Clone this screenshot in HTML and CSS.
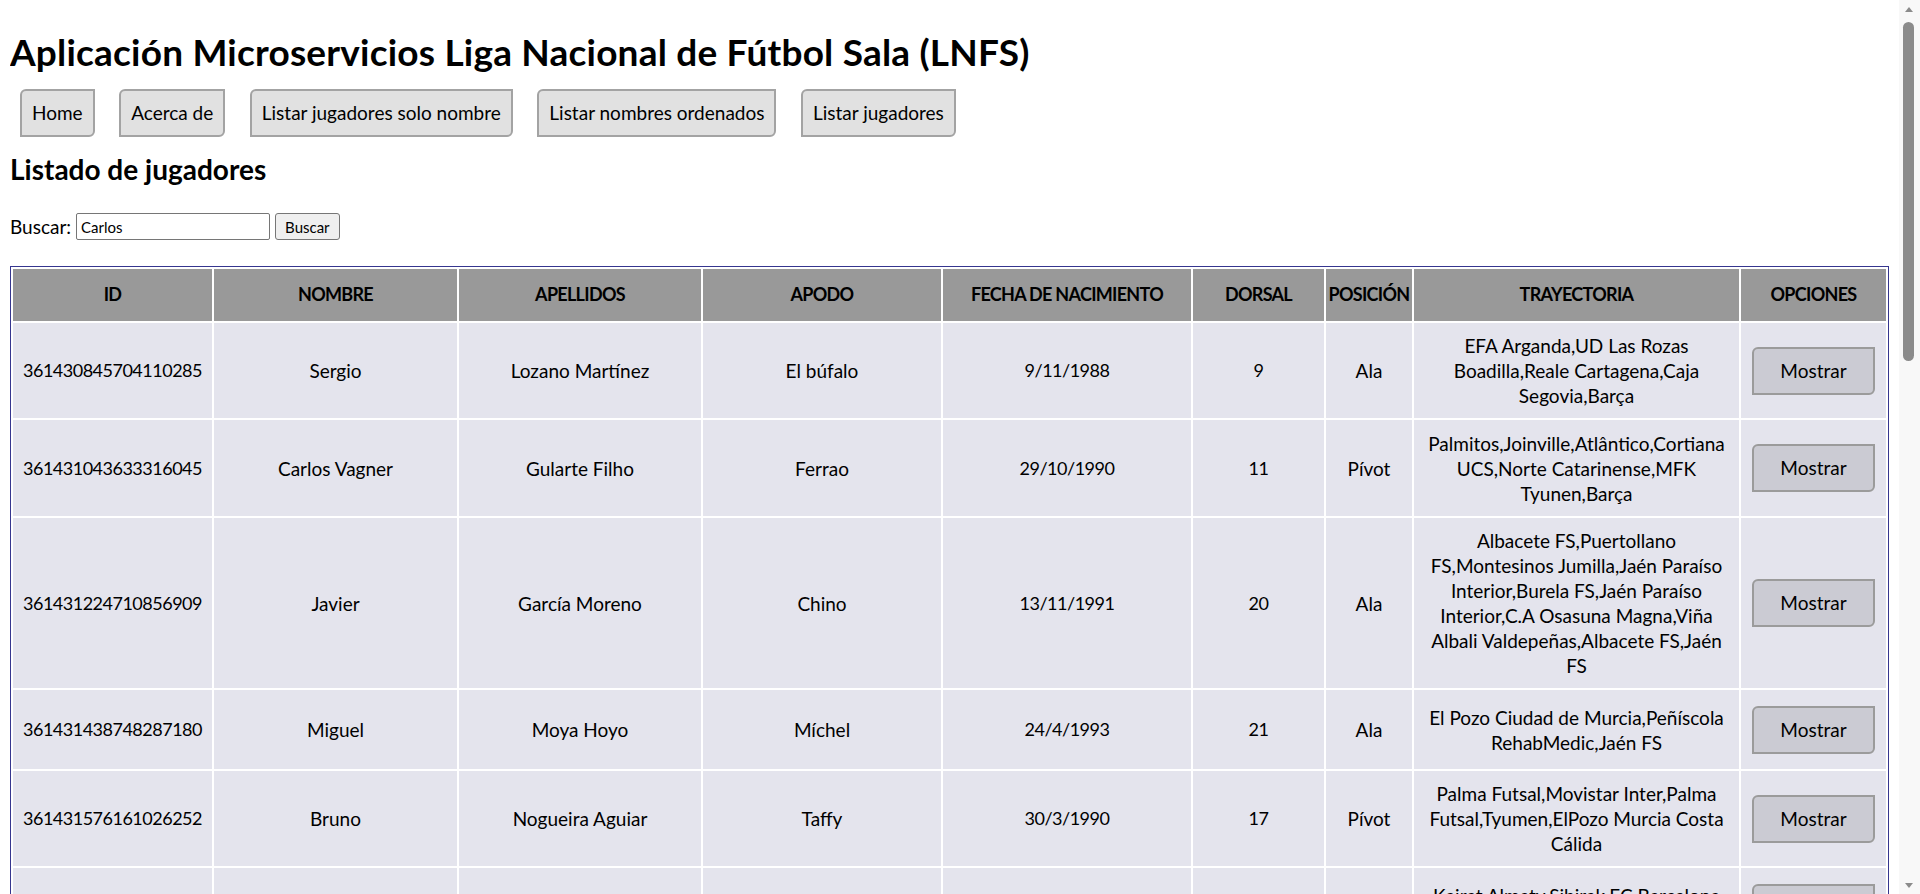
FILE: index.html
```html
<!DOCTYPE html>
<html lang="es">
<head>
<meta charset="utf-8">
<title>LNFS</title>
<link rel="stylesheet" href="styles.css">
</head>
<body>
<h1 class="title">Aplicación Microservicios Liga Nacional de Fútbol Sala (LNFS)</h1>
<nav class="nav">
  <button class="nav-btn">Home</button>
  <button class="nav-btn">Acerca de</button>
  <button class="nav-btn">Listar jugadores solo nombre</button>
  <button class="nav-btn">Listar nombres ordenados</button>
  <button class="nav-btn">Listar jugadores</button>
</nav>
<h2 class="subtitle">Listado de jugadores</h2>
<form class="search">
  <label class="search-label" for="q">Buscar:</label>
  <input class="search-input" id="q" type="text" value="Carlos">
  <button class="search-btn" type="button">Buscar</button>
</form>
<table class="players">
  <thead>
    <tr>
      <th class="c-id">ID</th>
      <th class="c-nombre">NOMBRE</th>
      <th class="c-apellidos">APELLIDOS</th>
      <th class="c-apodo">APODO</th>
      <th class="c-fecha">FECHA DE NACIMIENTO</th>
      <th class="c-dorsal">DORSAL</th>
      <th class="c-pos">POSICIÓN</th>
      <th class="c-tray">TRAYECTORIA</th>
      <th class="c-opc">OPCIONES</th>
    </tr>
  </thead>
  <tbody>
    <tr><td class="num">361430845704110285</td><td>Sergio</td><td>Lozano Martínez</td><td>El búfalo</td><td class="num">9/11/1988</td><td class="num">9</td><td>Ala</td><td class="tray">EFA Arganda,UD Las Rozas<br>Boadilla,Reale Cartagena,Caja<br>Segovia,Barça</td><td><button class="show-btn">Mostrar</button></td></tr>
    <tr><td class="num">361431043633316045</td><td>Carlos Vagner</td><td>Gularte Filho</td><td>Ferrao</td><td class="num">29/10/1990</td><td class="num">11</td><td>Pívot</td><td class="tray">Palmitos,Joinville,Atlântico,Cortiana<br>UCS,Norte Catarinense,MFK<br>Tyunen,Barça</td><td><button class="show-btn">Mostrar</button></td></tr>
    <tr><td class="num">361431224710856909</td><td>Javier</td><td>García Moreno</td><td>Chino</td><td class="num">13/11/1991</td><td class="num">20</td><td>Ala</td><td class="tray">Albacete FS,Puertollano<br>FS,Montesinos Jumilla,Jaén Paraíso<br>Interior,Burela FS,Jaén Paraíso<br>Interior,C.A Osasuna Magna,Viña<br>Albali Valdepeñas,Albacete FS,Jaén<br>FS</td><td><button class="show-btn">Mostrar</button></td></tr>
    <tr><td class="num">361431438748287180</td><td>Miguel</td><td>Moya Hoyo</td><td>Míchel</td><td class="num">24/4/1993</td><td class="num">21</td><td>Ala</td><td class="tray">El Pozo Ciudad de Murcia,Peñíscola<br>RehabMedic,Jaén FS</td><td><button class="show-btn">Mostrar</button></td></tr>
    <tr><td class="num">361431576161026252</td><td>Bruno</td><td>Nogueira Aguiar</td><td>Taffy</td><td class="num">30/3/1990</td><td class="num">17</td><td>Pívot</td><td class="tray">Palma Futsal,Movistar Inter,Palma<br>Futsal,Tyumen,ElPozo Murcia Costa<br>Cálida</td><td><button class="show-btn">Mostrar</button></td></tr>
    <tr><td class="num">361431705437315327</td><td>Dyego</td><td>Zuffo</td><td>Dyego</td><td class="num">16/6/1989</td><td class="num">10</td><td>Ala</td><td class="tray">Kairat Almaty,Sibirak,FC Barcelona<br>Lassa</td><td><button class="show-btn">Mostrar</button></td></tr>
    <tr><td class="num">361431862209417012</td><td>Adolfo</td><td>Fernández Díaz</td><td>Adolfo</td><td class="num">19/5/1993</td><td class="num">7</td><td>Ala</td><td class="tray">Valdepeñas,Inter Movistar,Barça<br>Lassa,Movistar Inter,FC<br>Barcelona</td><td><button class="show-btn">Mostrar</button></td></tr>
    <tr><td class="num">361432014598331740</td><td>Marc</td><td>Tolrà Coll</td><td>Tolrà</td><td class="num">3/2/1994</td><td class="num">4</td><td>Cierre</td><td class="tray">FC Barcelona B,Palma Futsal,FC<br>Barcelona</td><td><button class="show-btn">Mostrar</button></td></tr>
    <tr><td class="num">361432188705624913</td><td>Carlos</td><td>Ortiz Jiménez</td><td>Ortiz</td><td class="num">12/8/1983</td><td class="num">8</td><td>Cierre</td><td class="tray">Caja Segovia,Inter Movistar,Movistar<br>Inter,Kairat Almaty,Movistar<br>Inter</td><td><button class="show-btn">Mostrar</button></td></tr>
    <tr><td class="num">361432301874410396</td><td>Raúl</td><td>Campos Marcos</td><td>Raúl</td><td class="num">29/3/1987</td><td class="num">2</td><td>Cierre</td><td class="tray">Móstoles,Inter Movistar,ElPozo<br>Murcia,Movistar Inter</td><td><button class="show-btn">Mostrar</button></td></tr>
    <tr><td class="num">361432457781203554</td><td>Carlos</td><td>Barrón Espinosa</td><td>Barrón</td><td class="num">8/1/1995</td><td class="num">5</td><td>Ala</td><td class="tray">Atlético Benavente,Sala 10<br>Zaragoza,Movistar Inter,Jaén<br>Paraíso Interior,Palma Futsal<br>Cierre</td><td><button class="show-btn">Mostrar</button></td></tr>
    <tr><td class="num">361432619045517838</td><td>Jesús</td><td>Herrero Martínez</td><td>Herrero</td><td class="num">15/4/1990</td><td class="num">1</td><td>Portero</td><td class="tray">Carnicer Torrejón,Inter Movistar,<br>Movistar Inter,Sala 10<br>Zaragoza</td><td><button class="show-btn">Mostrar</button></td></tr>
    <tr><td class="num">361432785512960147</td><td>Fernando</td><td>Drasler Aguiar</td><td>Fernandão</td><td class="num">2/3/1986</td><td class="num">14</td><td>Pívot</td><td class="tray">Cortiana UCS,Carlos Barbosa,<br>ElPozo Murcia,FC Barcelona<br>Lassa</td><td><button class="show-btn">Mostrar</button></td></tr>
    <tr><td class="num">361432902368471285</td><td>Carlos</td><td>Sánchez Ruiz</td><td>Cuco</td><td class="num">21/7/1992</td><td class="num">12</td><td>Ala</td><td class="tray">Zamora FS,Burela FS,Peñíscola<br>RehabMedic</td><td><button class="show-btn">Mostrar</button></td></tr>
    <tr><td class="num">361433067793254520</td><td>Alejandro</td><td>Yepes Arias</td><td>Bebe</td><td class="num">6/9/1991</td><td class="num">3</td><td>Cierre</td><td class="tray">Burela FS,Santiago Futsal,Viña<br>Albali Valdepeñas,Levante UD<br>FS,Jimbee Cartagena</td><td><button class="show-btn">Mostrar</button></td></tr>
    <tr><td class="num">361433214480017733</td><td>Pablo</td><td>Ramírez Serrano</td><td>Pablo</td><td class="num">14/2/1996</td><td class="num">6</td><td>Ala</td><td class="tray">Santa Coloma,ElPozo Murcia,Jaén<br>Paraíso Interior,Industrias<br>Santa Coloma,Ribera Navarra<br>FS</td><td><button class="show-btn">Mostrar</button></td></tr>
    <tr><td class="num">361433388154902261</td><td>Carlos</td><td>Vega Molina</td><td>Carlitos</td><td class="num">27/11/1994</td><td class="num">15</td><td>Pívot</td><td class="tray">Córdoba Patrimonio,Manzanares<br>FS,Quesos El Hidalgo</td><td><button class="show-btn">Mostrar</button></td></tr>
    <tr><td class="num">361433549902718664</td><td>Diego</td><td>Nunes Silva</td><td>Dieguinho</td><td class="num">10/10/1988</td><td class="num">19</td><td>Ala</td><td class="tray">Joinville,Benfica,Sporting CP,<br>Palma Futsal,ElPozo Murcia<br>Costa Cálida</td><td><button class="show-btn">Mostrar</button></td></tr>
    <tr><td class="num">361433712065398412</td><td>Rafael</td><td>López Torres</td><td>Rafa</td><td class="num">5/5/1997</td><td class="num">13</td><td>Portero</td><td class="tray">Movistar Inter B,UMA<br>Antequera,Betis Futsal</td><td><button class="show-btn">Mostrar</button></td></tr>
  </tbody>
</table>
<div class="fake-scrollbar" aria-hidden="true">
  <span class="sb-arrow sb-up"></span>
  <span class="sb-thumb"></span>
  <span class="sb-arrow sb-down"></span>
</div>
</body>
</html>
```

FILE: styles.css
```css
html {
  background: #ffffff;
}

body {
  margin: 10px;
  font-family: "Lato", "Noto Sans", sans-serif;
  font-size: 19px;
  line-height: 24px;
  color: #000000;
}

.title {
  margin: 18px 0 0;
  font-size: 37px;
  line-height: 48px;
  font-weight: 700;
  letter-spacing: 0.2px;
}

.nav {
  display: flex;
  gap: 24.5px;
  margin-top: 13px;
  padding-left: 10px;
}

.nav-btn {
  font-family: inherit;
  font-size: 19px;
  line-height: 24px;
  padding: 10px 10px;
  color: #000000;
  background: #e1e1e1;
  border: 2px solid #a3a3a3;
  border-radius: 6px 0 6px 0;
}

.subtitle {
  margin: 15px 0 0;
  font-size: 28px;
  line-height: 34px;
  font-weight: 700;
}

.search {
  display: flex;
  align-items: center;
  gap: 5px;
  margin-top: 27px;
}

.search-label {
  font-size: 19px;
  line-height: 24px;
}

.search-input {
  box-sizing: border-box;
  width: 194px;
  height: 27px;
  padding: 1px 4px;
  font-family: inherit;
  font-size: 15px;
  color: #000000;
  border: 1px solid #767676;
  border-radius: 2px;
}

.search-btn {
  box-sizing: border-box;
  height: 27px;
  padding: 0 9px;
  font-family: inherit;
  font-size: 15px;
  color: #000000;
  background: #efefef;
  border: 1px solid #767676;
  border-radius: 3px;
}

.players {
  width: 1879px;
  margin-top: 26px;
  table-layout: fixed;
  border: 1px solid #36368f;
  border-spacing: 2px;
}

.players th {
  box-sizing: border-box;
  padding: 13.4px 0;
  background: #999999;
  font-size: 18px;
  line-height: 25px;
  font-weight: 700;
  letter-spacing: -0.7px;
  text-align: center;
  white-space: nowrap;
}

.players td {
  padding: 10.25px 5px;
  background: #e4e4ed;
  font-size: 19px;
  line-height: 25px;
  text-align: center;
  vertical-align: middle;
}

.players td.num {
  font-size: 18px;
  letter-spacing: -0.5px;
}

.players td.tray {
  white-space: nowrap;
}

.c-id { width: 199px; }
.c-nombre { width: 243px; }
.c-apellidos { width: 242px; }
.c-apodo { width: 238px; }
.c-fecha { width: 248px; }
.c-dorsal { width: 131px; }
.c-pos { width: 86px; }
.c-tray { width: 325px; }
.c-opc { width: 145px; }

.show-btn {
  width: 123px;
  margin: 5px 0;
  padding: 10px 0;
  font-family: inherit;
  font-size: 19px;
  line-height: 24px;
  color: #000000;
  background: #cbcbd3;
  border: 2px solid #9b9b9b;
  border-radius: 6px 0 6px 0;
}

.fake-scrollbar {
  position: fixed;
  top: 0;
  right: 0;
  width: 21px;
  height: 100vh;
  background: #f8f8f8;
}

.sb-thumb {
  position: absolute;
  top: 22px;
  left: 4px;
  width: 11px;
  height: 339px;
  border-radius: 6px;
  background: #8b8b8b;
}

.sb-arrow {
  position: absolute;
  left: 6px;
  width: 0;
  height: 0;
  border-left: 4px solid transparent;
  border-right: 4px solid transparent;
}

.sb-up {
  top: 7px;
  border-bottom: 5px solid #8b8b8b;
}

.sb-down {
  bottom: 6px;
  border-top: 5px solid #8b8b8b;
}
```
